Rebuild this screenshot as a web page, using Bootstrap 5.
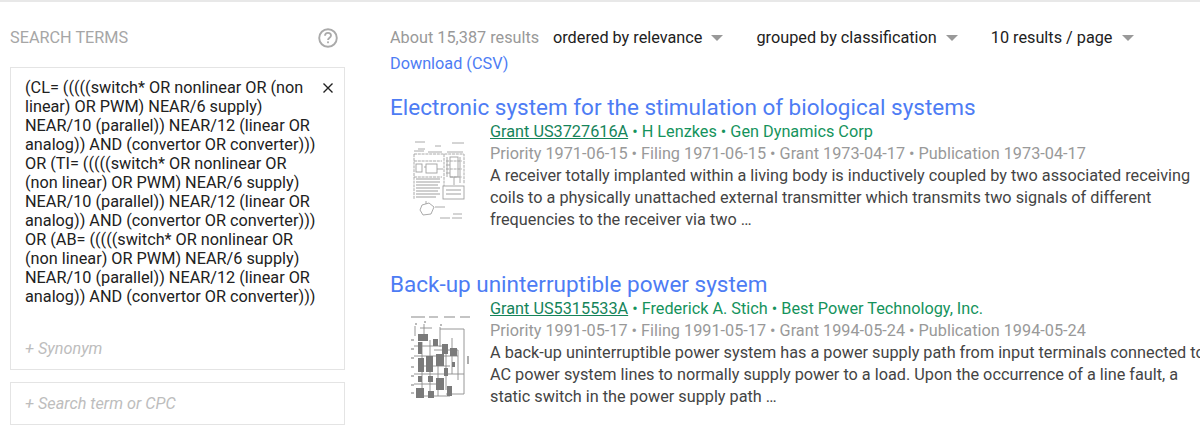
<!DOCTYPE html>
<html lang="en">
<head>
<meta charset="utf-8">
<title>Search terms</title>
<link href="https://cdn.jsdelivr.net/npm/bootstrap@5.3.0/dist/css/bootstrap.min.css" rel="stylesheet">
<style>
html,body{height:432px;overflow:hidden;background:#fff}
body{font-family:Roboto,"Liberation Sans",sans-serif;font-size:16.25px;line-height:22px;color:#212121}
.topline{height:2px;background:#e8e8e8}
.shell{padding:0 0 0 10px;gap:45px}
.side{width:335px;flex:none}
.side-head{height:34px;margin-top:19px;margin-bottom:12px;color:#a6a6a6}
.help{margin-right:6px}
.qbox{border:1px solid #e4e4e4;height:303px;padding:10px 10px 0 14px;margin-bottom:12px;line-height:19px}
.qtext{width:292px;color:#212121}
.qclose{margin-top:4px}
.syn{color:#bdbdbd;font-style:italic;padding-bottom:11px}
.addbox{border:1px solid #e4e4e4;height:43px;padding:0 14px;color:#bdbdbd;font-style:italic}
.main{width:810px;flex:none;padding-top:25px;overflow:hidden}
.count{color:#999;width:163px}
.dl{color:#4d7cf4;display:block;margin-top:4px;text-decoration:none}
.tri{width:0;height:0;border-left:6px solid transparent;border-right:6px solid transparent;border-top:6px solid #999;margin-left:9px;margin-right:33px}
.hit{margin-bottom:39px}
.hit-first{margin-top:18px}
.ttl{color:#4d7cf4;font-size:22.5px;line-height:28px;text-decoration:none;display:block}
.thumb{width:100px;flex:none;padding:8px 0 0 10px}
.thumb svg{filter:blur(.6px);display:block}
.meta{color:#15935c}
.meta a{color:#15845a}
.dates{color:#999}
.abs{color:#444}
.body-col{white-space:nowrap}
</style>
</head>
<body>
<div class="topline"></div>
<div class="d-flex shell">
  <aside class="side">
    <div class="side-head d-flex justify-content-between align-items-center">
      <span>SEARCH TERMS</span>
      <svg class="help" width="22" height="22" viewBox="0 0 22 22" fill="none"><circle cx="11" cy="11" r="8.8" stroke="#aaa" stroke-width="1.9"/><path d="M8 8.7c0-1.8 1.4-2.9 3-2.9s3 1.1 3 2.7c0 2.2-3 2.2-3 4.6" stroke="#aaa" stroke-width="1.8"/><rect x="10.1" y="14.4" width="1.8" height="1.8" fill="#aaa"/></svg>
    </div>
    <div class="qbox d-flex flex-column justify-content-between">
      <div class="d-flex justify-content-between">
        <div class="qtext">(CL= (((((switch* OR nonlinear OR (non linear) OR PWM) NEAR/6 supply) NEAR/10 (parallel)) NEAR/12 (linear OR analog)) AND (convertor OR converter))) OR (TI= (((((switch* OR nonlinear OR (non linear) OR PWM) NEAR/6 supply) NEAR/10 (parallel)) NEAR/12 (linear OR analog)) AND (convertor OR converter))) OR (AB= (((((switch* OR nonlinear OR (non linear) OR PWM) NEAR/6 supply) NEAR/10 (parallel)) NEAR/12 (linear OR analog)) AND (convertor OR converter)))</div>
        <svg class="qclose" width="12" height="12" viewBox="0 0 12 12"><path d="M1.5 1.5l9 9M10.5 1.5l-9 9" stroke="#212121" stroke-width="1.4"/></svg>
      </div>
      <div class="syn">+ Synonym</div>
    </div>
    <div class="addbox d-flex align-items-center">+ Search term or CPC</div>
  </aside>
  <main class="main">
    <div class="d-flex align-items-center">
      <span class="count">About 15,387 results</span>
      <span>ordered by relevance</span><span class="tri"></span>
      <span>grouped by classification</span><span class="tri"></span>
      <span>10 results / page</span><span class="tri"></span>
    </div>
    <a class="dl" href="#">Download (CSV)</a>
    <section class="hit hit-first">
      <a class="ttl" href="#">Electronic system for the stimulation of biological systems</a>
      <div class="d-flex">
        <div class="thumb">
          <svg width="80" height="92" viewBox="0 -2 80 92" fill="none" stroke="#a0a0a0" stroke-width=".9">
            <path d="M15 11h10M52 12h12M35 15h6M18 18h7M14 20h10M28 21h14M47 21h16"/>
            <path d="M14 23h50v30M14 23v45M44 23v32M14 30h28M14 46h28M46 30h16M46 38h16M50 46h12" stroke-dasharray="3 .8"/>
            <rect x="16" y="33" width="6" height="8"/><rect x="26" y="33" width="11" height="9"/><rect x="50" y="26" width="8" height="20"/>
            <path d="M24 36h2M37 38h6M47 26v20M60 26v26M54 46v8M46 34h4M46 42h4" />
            <path d="M16 48h24M16 51h24M16 54h22M16 57h24M16 60h22M16 63h24M16 66h20" stroke-width="1.2"/>
            <rect x="43" y="55" width="21" height="13"/><path d="M46 59h15M46 63h15" stroke-width="1"/>
            <path d="M22 74l7-2 5 4-3 7-8 1-3-5zM26 70v3M35 76h10M40 87h10M52 87h10M53 83h9"/>
          </svg>
        </div>
        <div class="body-col">
          <div class="meta"><a href="#">Grant US3727616A</a> • H Lenzkes • Gen Dynamics Corp</div>
          <div class="dates">Priority 1971-06-15 • Filing 1971-06-15 • Grant 1973-04-17 • Publication 1973-04-17</div>
          <div class="abs">A receiver totally implanted within a living body is inductively coupled by two associated receiving<br>coils to a physically unattached external transmitter which transmits two signals of different<br>frequencies to the receiver via two …</div>
        </div>
      </div>
    </section>
    <section class="hit">
      <a class="ttl" href="#">Back-up uninterruptible power system</a>
      <div class="d-flex">
        <div class="thumb">
          <svg width="80" height="100" viewBox="0 0 80 100" fill="none" stroke="#8c8c8c" stroke-width=".9">
            <path d="M11 11h14M29 11h9M44 11h11M60 11h10" stroke="#8a8a8a" stroke-width="1.2"/>
            <path d="M40 23h24v65H46M40 21v20M15 20v10M24 18v10M20 22h12M14 40h32M14 50h44M14 68h50M14 78h30M16 90h34M30 34v52M46 40v44M34 44h24M52 32v36M58 44v30M24 60h26M38 60v30M22 36v50"/>
            <path d="M11 34h3M11 43h3M11 52h3M11 61h3M11 70h3M11 79h3M11 87h3M15 18h2M24 16h2M40 19h2M68 50v8" stroke="#777" stroke-width="1.2"/>
            <g fill="#7a7a7a" stroke="none">
              <rect x="18" y="28" width="10" height="7"/><rect x="33" y="33" width="5" height="7"/><rect x="42" y="38" width="6" height="10"/><rect x="50" y="42" width="7" height="8"/>
              <rect x="18" y="36" width="4" height="12"/><rect x="18" y="52" width="6" height="14"/><rect x="26" y="50" width="7" height="16"/><rect x="36" y="48" width="8" height="12"/>
              <rect x="18" y="70" width="4" height="6"/><rect x="36" y="72" width="8" height="12"/><rect x="47" y="80" width="5" height="10"/><rect x="16" y="82" width="8" height="10"/><rect x="28" y="85" width="6" height="7"/>
              <rect x="44" y="62" width="4" height="8"/><rect x="28" y="70" width="5" height="6"/><rect x="52" y="56" width="3" height="5"/>
            </g>
          </svg>
        </div>
        <div class="body-col">
          <div class="meta"><a href="#">Grant US5315533A</a> • Frederick A. Stich • Best Power Technology, Inc.</div>
          <div class="dates">Priority 1991-05-17 • Filing 1991-05-17 • Grant 1994-05-24 • Publication 1994-05-24</div>
          <div class="abs">A back-up uninterruptible power system has a power supply path from input terminals connected to<br>AC power system lines to normally supply power to a load. Upon the occurrence of a line fault, a<br>static switch in the power supply path …</div>
        </div>
      </div>
    </section>
  </main>
</div>
<script src="https://cdn.jsdelivr.net/npm/bootstrap@5.3.0/dist/js/bootstrap.bundle.min.js"></script>
</body>
</html>
